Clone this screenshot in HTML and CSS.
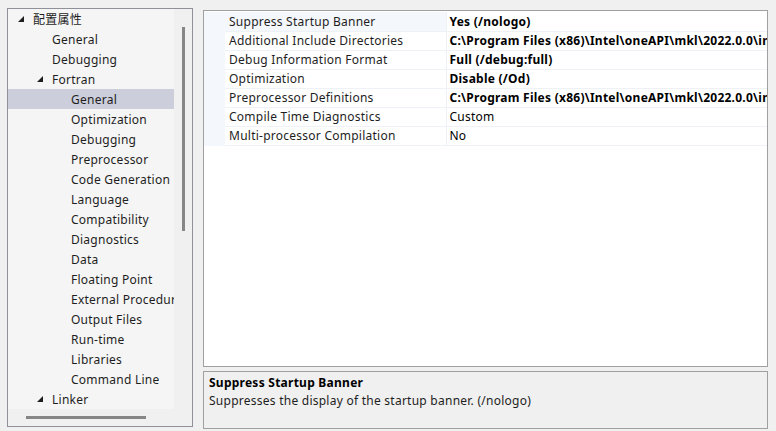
FILE: index.html
```html
<!DOCTYPE html>
<html lang="zh-CN">
<head>
	<meta charset="UTF-8">
	<title>配置属性</title>
	<link rel="stylesheet" href="styles.css">
</head>
<body>
	<div class="dialog">
		<div class="tree-box">
			<div class="tree-main">
				<ul class="tree">
					<li class="node lvl1"><span class="tog"><svg viewBox="0 0 6 6"><polygon points="6,0 6,6 0,6"/></svg></span>配置属性</li>
					<li class="node lvl2"><span class="tog"></span>General</li>
					<li class="node lvl2"><span class="tog"></span>Debugging</li>
					<li class="node lvl2"><span class="tog"><svg viewBox="0 0 6 6"><polygon points="6,0 6,6 0,6"/></svg></span>Fortran</li>
					<li class="node lvl3 selected"><span class="tog"></span>General</li>
					<li class="node lvl3"><span class="tog"></span>Optimization</li>
					<li class="node lvl3"><span class="tog"></span>Debugging</li>
					<li class="node lvl3"><span class="tog"></span>Preprocessor</li>
					<li class="node lvl3"><span class="tog"></span>Code Generation</li>
					<li class="node lvl3"><span class="tog"></span>Language</li>
					<li class="node lvl3"><span class="tog"></span>Compatibility</li>
					<li class="node lvl3"><span class="tog"></span>Diagnostics</li>
					<li class="node lvl3"><span class="tog"></span>Data</li>
					<li class="node lvl3"><span class="tog"></span>Floating Point</li>
					<li class="node lvl3"><span class="tog"></span>External Procedures</li>
					<li class="node lvl3"><span class="tog"></span>Output Files</li>
					<li class="node lvl3"><span class="tog"></span>Run-time</li>
					<li class="node lvl3"><span class="tog"></span>Libraries</li>
					<li class="node lvl3"><span class="tog"></span>Command Line</li>
					<li class="node lvl2"><span class="tog"><svg viewBox="0 0 6 6"><polygon points="6,0 6,6 0,6"/></svg></span>Linker</li>
				</ul>
				<div class="vscroll"><div class="vthumb"></div></div>
			</div>
			<div class="tree-foot">
				<div class="hscroll"><div class="hthumb"></div></div>
				<div class="corner"></div>
			</div>
		</div>
		<div class="right">
			<div class="grid">
				<table class="props">
					<tr class="current"><td class="margin"></td><td class="name">Suppress Startup Banner</td><td class="value bold">Yes (/nologo)</td></tr>
					<tr><td class="margin"></td><td class="name">Additional Include Directories</td><td class="value bold">C:\Program Files (x86)\Intel\oneAPI\mkl\2022.0.0\include</td></tr>
					<tr><td class="margin"></td><td class="name">Debug Information Format</td><td class="value bold">Full (/debug:full)</td></tr>
					<tr><td class="margin"></td><td class="name">Optimization</td><td class="value bold">Disable (/Od)</td></tr>
					<tr><td class="margin"></td><td class="name">Preprocessor Definitions</td><td class="value bold">C:\Program Files (x86)\Intel\oneAPI\mkl\2022.0.0\include</td></tr>
					<tr><td class="margin"></td><td class="name">Compile Time Diagnostics</td><td class="value">Custom</td></tr>
					<tr><td class="margin"></td><td class="name">Multi-processor Compilation</td><td class="value">No</td></tr>
				</table>
			</div>
			<div class="desc">
				<div class="desc-title">Suppress Startup Banner</div>
				<div class="desc-text">Suppresses the display of the startup banner. (/nologo)</div>
			</div>
		</div>
	</div>
</body>
</html>
```
FILE: styles.css
```css
* {margin: 0;padding: 0;box-sizing: border-box;}
ul {list-style: none;}
html, body {width: 776px;height: 431px;overflow: hidden;}
body {background: #f0f0f0;font-family: "Noto Sans", "Noto Sans CJK SC", sans-serif;font-size: 12px;letter-spacing: 0.25px;color: #1e1e1e;}
.dialog {display: flex;padding: 8px 0 0 7px;gap: 10px;align-items: flex-start;}

/* tree */
.tree-box {width: 186px;height: 419px;border: 1px solid #8f909a;display: flex;flex-direction: column;background: #f0f0f0;}
.tree-main {display: flex;height: 400px;}
.tree {width: 166px;background: #f5f5f5;overflow: hidden;}
.node {display: flex;align-items: center;height: 20px;white-space: nowrap;}
.lvl1 {padding-left: 6px;}
.lvl2 {padding-left: 25px;}
.lvl3 {padding-left: 44px;}
.tog {display: flex;align-items: center;width: 19px;height: 20px;padding-left: 4px;flex-shrink: 0;}
.tog svg {width: 6px;height: 6px;fill: #1e1e1e;}
.node.selected {background: #cccedb;}
.vscroll {width: 18px;padding: 18px 0 0 8px;}
.vthumb {width: 3px;height: 204px;background: #868686;}
.tree-foot {display: flex;height: 17px;}
.hscroll {width: 166px;padding: 7px 0 0 18px;}
.hthumb {width: 120px;height: 3px;background: #868686;}
.corner {flex: 1;}

/* property grid */
.right {display: flex;flex-direction: column;gap: 4px;padding-top: 2px;}
.grid {width: 565px;height: 357px;border: 1px solid #a0a0a0;background: #fff;overflow: hidden;padding-top: 1px;}
.props {border-collapse: collapse;table-layout: fixed;width: 700px;}
.props td {height: 19px;padding: 0;white-space: nowrap;overflow: hidden;border-bottom: 1px solid #eef1f6;vertical-align: middle;}
.props td.margin {width: 21px;background: #f4f7fb;border-bottom-color: #f4f7fb;}
.props td.name {width: 221px;padding-left: 4px;border-right: 1px solid #eef1f6;}
.props td.value {padding-left: 3px;color: #000;}
.props td.bold {font-weight: bold;}
.props tr.current td.name {background: #f4f7fb;}

/* description */
.desc {width: 565px;height: 58px;border: 1px solid #a0a0a0;background: #f0f0f0;padding: 2px 5px;}
.desc-title {font-weight: bold;color: #000;line-height: 18px;}
.desc-text {line-height: 18px;color: #1e1e1e;}
```
